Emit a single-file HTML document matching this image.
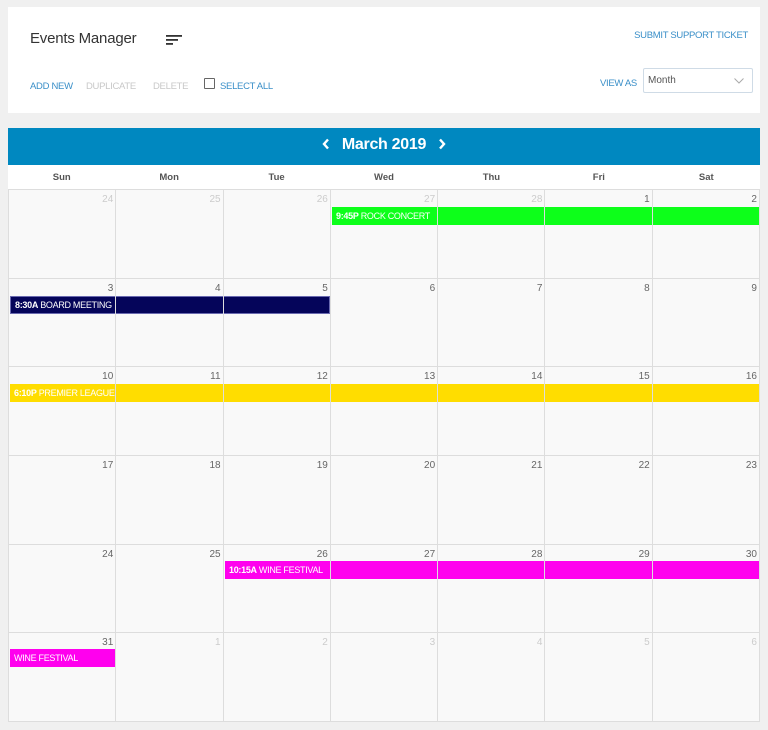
<!DOCTYPE html>
<html><head><meta charset="utf-8"><style>
*{margin:0;padding:0;box-sizing:border-box}
body{width:768px;height:730px;background:#f0f0f0;font-family:"Liberation Sans",sans-serif;position:relative;overflow:hidden}
.hdr{position:absolute;left:8px;top:7px;width:752px;height:106px;background:#fff}
.a{position:absolute;font-size:9.5px;color:#3a8fc8;white-space:nowrap;letter-spacing:-0.3px}
.g{color:#c8c8c8}
.cal{position:absolute;left:8px;top:128px;width:752px}
.top{height:37px;background:#0088c0;color:#fff;text-align:center;font-size:16px;font-weight:bold;line-height:34px;letter-spacing:-0.3px}
.dh{height:25px;background:#fff;display:grid;grid-template-columns:repeat(7,1fr);font-size:9.5px;font-weight:bold;color:#555;text-align:center;line-height:25px;border-bottom:1px solid #ddd}
.grid{position:relative;height:532px;display:grid;grid-template-columns:repeat(7,1fr);grid-template-rows:repeat(6,1fr);border-left:1px solid #ddd;background:#f9f9f9}
.grid>div.c{position:relative;z-index:2;border-right:1px solid #ddd;border-bottom:1px solid #ddd;text-align:right;font-size:10px;color:#666;padding:4px 2px 0 0}
.grid>div.o{color:#ccc}
.bar{position:absolute;z-index:1;height:18px;font-size:9px;color:#fff;line-height:18px;padding-left:4px;white-space:nowrap;letter-spacing:-0.3px}
.bar b{font-weight:bold}
</style></head><body>
<div class="hdr">
<div style="position:absolute;left:22px;top:23px;font-size:15px;color:#333;letter-spacing:-0.2px">Events Manager</div>
<svg style="position:absolute;left:158px;top:26px" width="16" height="14"><rect x="0" y="2" width="16" height="1.8" fill="#333"/><rect x="0" y="6" width="12" height="1.8" fill="#333"/><rect x="0" y="10" width="7" height="1.8" fill="#333"/></svg>
<div class="a" style="right:12px;top:23px">SUBMIT SUPPORT TICKET</div>
<div class="a" style="left:22px;top:74px">ADD NEW</div>
<div class="a g" style="left:78px;top:74px">DUPLICATE</div>
<div class="a g" style="left:145px;top:74px">DELETE</div>
<div style="position:absolute;left:196px;top:71px;width:11px;height:11px;border:1.5px solid #666;border-radius:1px"></div>
<div class="a" style="left:212px;top:74px">SELECT ALL</div>
<div class="a" style="left:592px;top:71px">VIEW AS</div>
<div style="position:absolute;left:635px;top:61px;width:110px;height:25px;border:1px solid #cfdbe6;border-radius:2px;font-size:10px;color:#555;padding:6px 0 0 4px">Month
<svg style="position:absolute;right:8px;top:9px" width="10" height="6"><path d="M0.5 0.5L5 5L9.5 0.5" stroke="#aaa" fill="none"/></svg></div>
</div>
<div class="cal">
<div class="top"><svg width="8" height="12" style="margin-right:12px;vertical-align:-1px"><path d="M6 1.5L2 6L6 10.5" stroke="#fff" stroke-width="2.4" fill="none"/></svg>March 2019<svg width="8" height="12" style="margin-left:12px;vertical-align:-1px"><path d="M2 1.5L6 6L2 10.5" stroke="#fff" stroke-width="2.4" fill="none"/></svg></div>
<div class="dh"><div>Sun</div><div>Mon</div><div>Tue</div><div>Wed</div><div>Thu</div><div>Fri</div><div>Sat</div></div>
<div class="grid">
<div class="c o">24</div><div class="c o">25</div><div class="c o">26</div><div class="c o">27</div><div class="c o">28</div><div class="c">1</div><div class="c">2</div>
<div class="c">3</div><div class="c">4</div><div class="c">5</div><div class="c">6</div><div class="c">7</div><div class="c">8</div><div class="c">9</div>
<div class="c">10</div><div class="c">11</div><div class="c">12</div><div class="c">13</div><div class="c">14</div><div class="c">15</div><div class="c">16</div>
<div class="c">17</div><div class="c">18</div><div class="c">19</div><div class="c">20</div><div class="c">21</div><div class="c">22</div><div class="c">23</div>
<div class="c">24</div><div class="c">25</div><div class="c">26</div><div class="c">27</div><div class="c">28</div><div class="c">29</div><div class="c">30</div>
<div class="c">31</div><div class="c o">1</div><div class="c o">2</div><div class="c o">3</div><div class="c o">4</div><div class="c o">5</div><div class="c o">6</div>
<div class="bar" style="top:17px;left:323px;width:427px;background:#0dff1a"><b>9:45P</b> ROCK CONCERT</div>
<div class="bar" style="top:106px;left:1px;width:320px;background:#05055a;border:1px solid #6a6ab0;line-height:16px"><b>8:30A</b> BOARD MEETING</div>
<div class="bar" style="top:194px;left:1px;width:749px;background:#ffdd00"><b>6:10P</b> PREMIER LEAGUE</div>
<div class="bar" style="top:371px;left:216px;width:534px;background:#ff00ee"><b>10:15A</b> WINE FESTIVAL</div>
<div class="bar" style="top:459px;left:1px;width:105px;background:#ff00ee">WINE FESTIVAL</div>
</div>
</div>
</body></html>
